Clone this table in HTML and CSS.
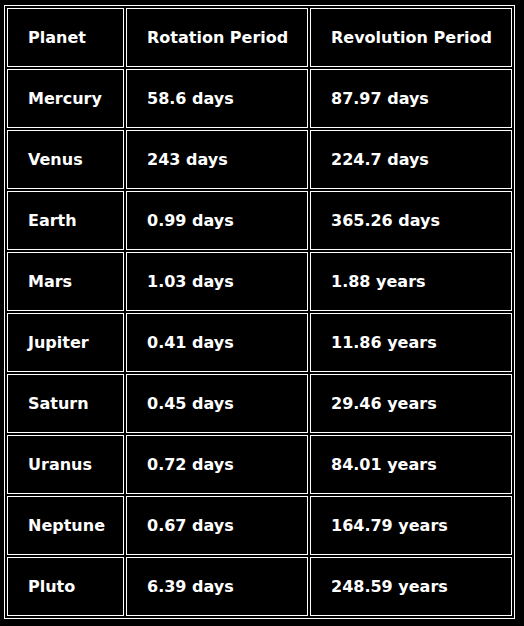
FILE: index.html
```html
<!DOCTYPE html>
<html>
<head>
<meta charset="utf-8">
<link rel="stylesheet" href="styles.css">
</head>
<body>
<table class="planets">
  <tr><td class="c1">Planet</td><td class="c2">Rotation Period</td><td class="c3">Revolution Period</td></tr>
  <tr><td class="c1">Mercury</td><td class="c2">58.6 days</td><td class="c3">87.97 days</td></tr>
  <tr><td class="c1">Venus</td><td class="c2">243 days</td><td class="c3">224.7 days</td></tr>
  <tr><td class="c1">Earth</td><td class="c2">0.99 days</td><td class="c3">365.26 days</td></tr>
  <tr><td class="c1">Mars</td><td class="c2">1.03 days</td><td class="c3">1.88 years</td></tr>
  <tr><td class="c1">Jupiter</td><td class="c2">0.41 days</td><td class="c3">11.86 years</td></tr>
  <tr><td class="c1">Saturn</td><td class="c2">0.45 days</td><td class="c3">29.46 years</td></tr>
  <tr><td class="c1">Uranus</td><td class="c2">0.72 days</td><td class="c3">84.01 years</td></tr>
  <tr><td class="c1">Neptune</td><td class="c2">0.67 days</td><td class="c3">164.79 years</td></tr>
  <tr><td class="c1">Pluto</td><td class="c2">6.39 days</td><td class="c3">248.59 years</td></tr>
</table>
</body>
</html>
```
FILE: styles.css
```css
html, body {
  margin: 0;
  padding: 0;
  background: #000;
}
body {
  padding: 5px 0 0 4px;
  font-family: "DejaVu Sans", Verdana, sans-serif;
  font-weight: bold;
  font-size: 16px;
  color: #fff;
}
.planets {
  border: 1px solid #fff;
  border-collapse: separate;
  border-spacing: 2px;
  table-layout: fixed;
}
.planets td {
  border: 1px solid #fff;
  box-sizing: border-box;
  height: 59px;
  padding: 0 0 0 20px;
  vertical-align: middle;
  white-space: nowrap;
  line-height: 19px;
}
.c1 { width: 117px; }
.c2 { width: 182px; }
.c3 { width: 202px; }
```
